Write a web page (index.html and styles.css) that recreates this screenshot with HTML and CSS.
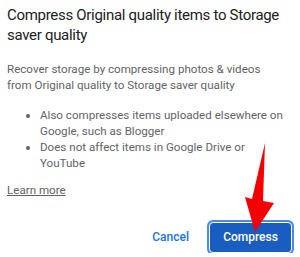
FILE: index.html
```html
<!DOCTYPE html>
<html>
  <head>
    <title>Compress</title>
    <link rel="stylesheet" href="styles.css">
  </head>
  <body>
    <div class="dialog">
      <h1 class="title">Compress Original quality items to Storage saver quality</h1>

      <p class="desc">Recover storage by compressing photos &amp; videos from Original quality to Storage saver quality</p>

      <ul class="points">
        <li>Also compresses items uploaded elsewhere on Google, such as Blogger</li>
        <li>Does not affect items in Google Drive or YouTube</li>
      </ul>

      <a class="learn" href="#">Learn more</a>

      <div class="actions">
        <button class="cancel">Cancel</button>
        <button class="compress">Compress</button>
      </div>
    </div>

    <svg class="arrow" width="300" height="257" viewBox="0 0 300 257">
      <polygon points="265,143 263,201 274,203 255,232 245,197 252,199" fill="#f50000"/>
    </svg>
  </body>
</html>
```

FILE: styles.css
```css
body{
  margin: 0;
  background-color: white;
  font-family: Roboto, "Noto Sans", sans-serif;
}
.dialog{
  padding: 6px 8px 0 7px;
}
.title{
  margin: 0;
  font-family: Roboto, sans-serif;
  font-size: 15px;
  letter-spacing: -0.3px;
  font-weight: 400;
  line-height: 19.5px;
  color: #202124;
}
.desc{
  margin: 17px 0 0 0;
  max-width: 280px;
  font-size: 11.6px;
  line-height: 15.5px;
  color: #5f6368;
}
.points{
  margin: 13.5px 0 0 0;
  padding-left: 33px;
  font-size: 11.6px;
  line-height: 16.3px;
  color: #5f6368;
}
.learn{
  display: inline-block;
  margin-top: 11px;
  font-size: 11.6px;
  color: #5f6368;
}
.actions{
  display: flex;
  justify-content: flex-end;
  align-items: center;
  gap: 20px;
  margin-top: 24px;
}
.cancel{
  background: none;
  border: none;
  padding: 0;
  font-family: Roboto, sans-serif;
  font-size: 12px;
  font-weight: 500;
  color: #1a73e8;
}
.compress{
  width: 83px;
  height: 31px;
  background-color: #1a5dc0;
  border: 1px solid white;
  border-radius: 4px;
  box-shadow: 0 0 0 2px #4b8ae8;
  font-family: Roboto, sans-serif;
  font-size: 12px;
  font-weight: 500;
  color: white;
}
.arrow{
  position: absolute;
  left: 0;
  top: 0;
  pointer-events: none;
}
```
